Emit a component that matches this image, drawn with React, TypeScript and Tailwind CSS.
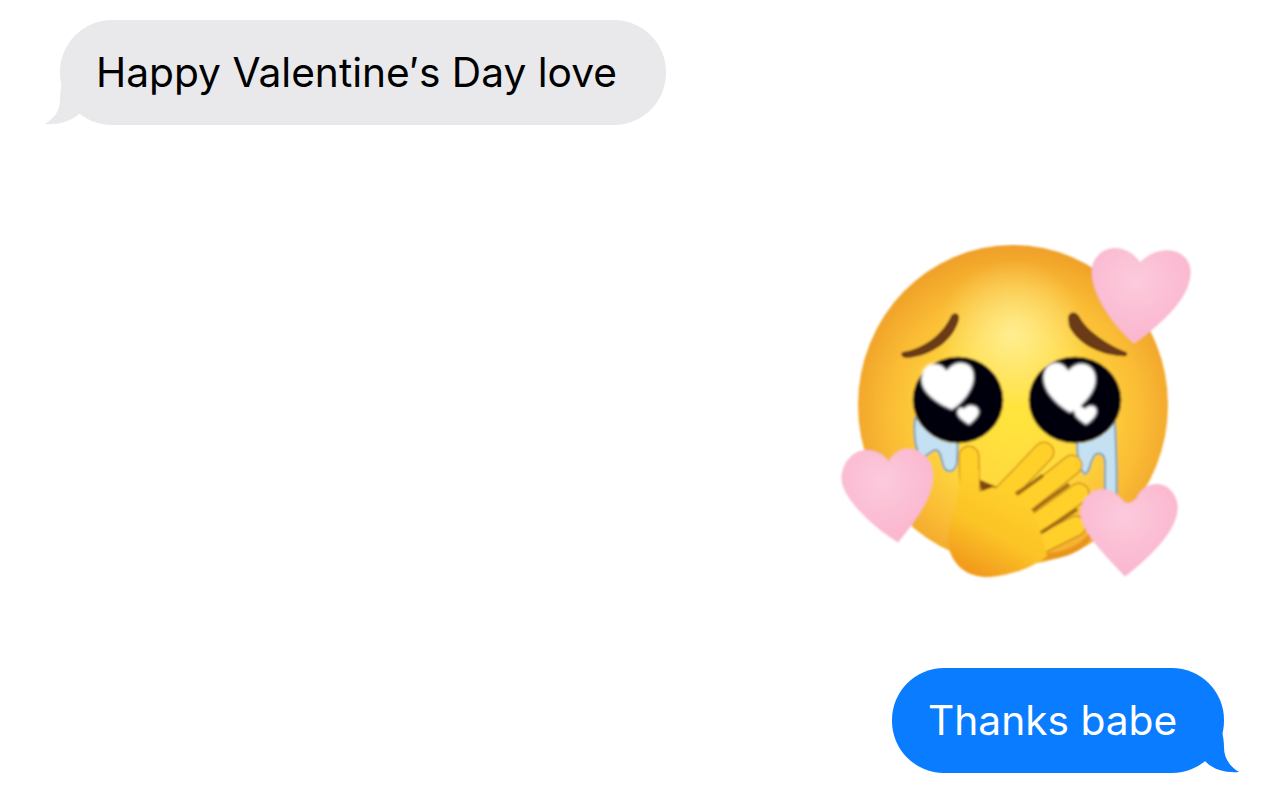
import React from "react";

function Heart({ d }: { d: string }) {
  return <path d={d} fill="url(#pink)" stroke="#f7b9cf" strokeWidth="1" />;
}

const fingers = [
  "M969 456L970 500",
  "M1002 496L1044 452",
  "M1018 508L1072 465",
  "M1030 528L1079 493",
  "M1032 548L1076 526",
];

function PleadingEmoji() {
  return (
    <svg
      viewBox="838 244 356 336"
      className="w-[356px] h-[336px] block"
      aria-label="pleading face with hearts"
    >
      <defs>
        <radialGradient id="face" gradientUnits="userSpaceOnUse" cx="1015" cy="415" r="170">
          <stop offset="0%" stopColor="#ffe53c" />
          <stop offset="45%" stopColor="#ffd83e" />
          <stop offset="75%" stopColor="#fabb34" />
          <stop offset="100%" stopColor="#ef9f28" />
        </radialGradient>
        <radialGradient id="shine">
          <stop offset="0%" stopColor="#fff2a0" stopOpacity="0.85" />
          <stop offset="100%" stopColor="#fff2a0" stopOpacity="0" />
        </radialGradient>
        <linearGradient id="palm" gradientUnits="userSpaceOnUse" x1="1030" y1="480" x2="975" y2="582">
          <stop offset="0%" stopColor="#ffd42c" />
          <stop offset="55%" stopColor="#fcc427" />
          <stop offset="100%" stopColor="#f0931b" />
        </linearGradient>
        <radialGradient id="pink" cx="45%" cy="35%" r="70%">
          <stop offset="0%" stopColor="#fdcadc" />
          <stop offset="100%" stopColor="#fab4cd" />
        </radialGradient>
        <filter id="soft" x="-5%" y="-5%" width="110%" height="110%">
          <feGaussianBlur stdDeviation="0.8" />
        </filter>
        <filter id="softer" x="-20%" y="-20%" width="140%" height="140%">
          <feGaussianBlur stdDeviation="1.3" />
        </filter>
      </defs>
      <g filter="url(#soft)">
        <ellipse cx="1013" cy="405" rx="155" ry="160" fill="url(#face)" />
        <ellipse cx="1013" cy="335" rx="75" ry="75" fill="url(#shine)" />
        {/* brows */}
        <path
          d="M903 352C922 349 942 336 951 316C954 311 960 313 959 319C954 340 932 356 907 358C901 358 900 353 903 352Z"
          fill="#6b3a12"
        />
        <path
          d="M1068 318C1069 311 1076 311 1079 316C1086 330 1106 344 1126 352C1129 355 1126 357 1122 356C1098 355 1076 342 1069 326Z"
          fill="#6b3a12"
        />
        {/* tears */}
        <path
          d="M915 418C913 432 915 448 920 456C925 460 930 450 936 450C942 451 941 464 945 469C950 474 956 470 957 462L958 440Z"
          fill="#c3e1f2"
          stroke="#7f9fb0"
          strokeWidth="2"
        />
        <path
          d="M1077 440C1077 455 1079 470 1085 474C1090 474 1090 458 1096 454C1102 452 1105 456 1105 464L1105 508C1106 518 1115 519 1116 508C1118 480 1116 450 1115 422Z"
          fill="#c3e1f2"
          stroke="#7f9fb0"
          strokeWidth="2"
        />
        {/* eyes */}
        <ellipse cx="958" cy="400" rx="45" ry="43" fill="#05050f" stroke="#8a6a20" strokeWidth="1" />
        <ellipse cx="1075" cy="400" rx="46" ry="43" fill="#05050f" stroke="#8a6a20" strokeWidth="1" />
        <g filter="url(#softer)" stroke="#fff" strokeWidth="2" strokeLinejoin="round">
          <path
            d="M947 372C940 360 922 362 922 380C922 392 938 404 952 409C962 403 975 388 973 374C971 360 953 360 947 372Z"
            fill="#fff"
          />
          <path d="M964 410C960 405 957 411 958 414C960 419 966 422 969 424C974 420 980 414 978 410C976 405 968 404 964 410Z" fill="#fff" />
          <path
            d="M1068 372C1062 358 1045 362 1044 376C1043 390 1056 404 1070 412C1082 406 1096 392 1095 378C1094 362 1076 360 1068 372Z"
            fill="#fff"
          />
          <path d="M1085 410C1080 404 1075 408 1075 413C1076 418 1082 421 1086 424C1091 421 1097 415 1096 410C1095 405 1088 405 1085 410Z" fill="#fff" />
        </g>
        {/* mouth */}
        <path d="M978 479L997 487L983 497Z" fill="#7d4a10" />
        {/* hand */}
        <path d="M1047 553C1066 552 1084 544 1092 528L1090 540C1082 552 1062 560 1040 560Z" fill="#e8951f" />
        {fingers.map((d) => (
          <path key={"edge" + d} d={d} stroke="#c98a14" strokeWidth="21" strokeLinecap="round" fill="none" />
        ))}
        {fingers.map((d) => (
          <path key={d} d={d} stroke="#ffd02c" strokeWidth="18.5" strokeLinecap="round" fill="none" />
        ))}
        <path
          d="M960 470L979 470L979 492L993 487L1017 495L1033 512L1042 532L1047 556C1032 568 1012 575 990 577C970 578 956 568 950 552C946 538 950 522 955 507C958 495 960 482 960 470Z"
          fill="url(#palm)"
        />
        <path d="M1017 493C1026 488 1034 482 1042 476" stroke="#a06a12" strokeWidth="3.5" fill="none" strokeLinecap="round" />
        <path d="M1034 510C1044 502 1056 494 1068 485" stroke="#a06a12" strokeWidth="3.5" fill="none" strokeLinecap="round" />
        <path d="M1042 532C1052 526 1064 518 1076 510" stroke="#a06a12" strokeWidth="3.5" fill="none" strokeLinecap="round" />
        {/* hearts */}
        <Heart d="M1140 263C1128 244 1100 243 1093 265C1088 288 1110 322 1134 343C1158 326 1192 298 1190 270C1188 248 1158 244 1140 263Z" />
        <Heart d="M889 462C876 444 846 446 842 476C840 496 872 526 898 542C914 522 936 494 932 470C928 446 898 442 889 462Z" />
        <Heart d="M1137 498C1144 480 1172 478 1177 504C1180 530 1146 560 1125 576C1106 556 1078 528 1081 510C1085 486 1110 484 1122 500C1126 505 1132 504 1137 498Z" />
      </g>
    </svg>
  );
}

export default function App() {
  return (
    <div className="w-full h-[788px] overflow-hidden bg-white flex flex-col pt-5 font-['Inter',sans-serif] text-[40.7px] leading-[105px]">
      <div className="relative self-start ml-[60px] h-[105px] w-[606px] rounded-[52px] bg-[#e9e9eb] pl-[36px] text-black whitespace-nowrap">
        Happy Valentine′s Day love
        <svg viewBox="0 0 50 40" className="absolute left-[-15px] bottom-0 w-[50px] h-[40px]">
          <path d="M16.5 0C15.5 5 15 10 15 14C15 24 11 32 0 39C10 40 25 38 35 28L48 37L48 0Z" fill="#e9e9eb" />
        </svg>
      </div>

      <div className="self-end mr-[90px] mt-[119px]">
        <PleadingEmoji />
      </div>

      <div className="relative self-end mr-[60px] mt-[88px] h-[105px] w-[332px] rounded-[52px] bg-[#0a7cff] pl-[36px] text-white whitespace-nowrap">
        Thanks babe
        <svg viewBox="0 0 50 40" className="absolute right-[-16px] bottom-0 w-[50px] h-[40px]">
          <path d="M32.3 0C33.5 5 34 10 34 14C34 24 38 32 49 39C39 40 24 38 15 28L0 36L0 0Z" fill="#0a7cff" />
        </svg>
      </div>
    </div>
  );
}
